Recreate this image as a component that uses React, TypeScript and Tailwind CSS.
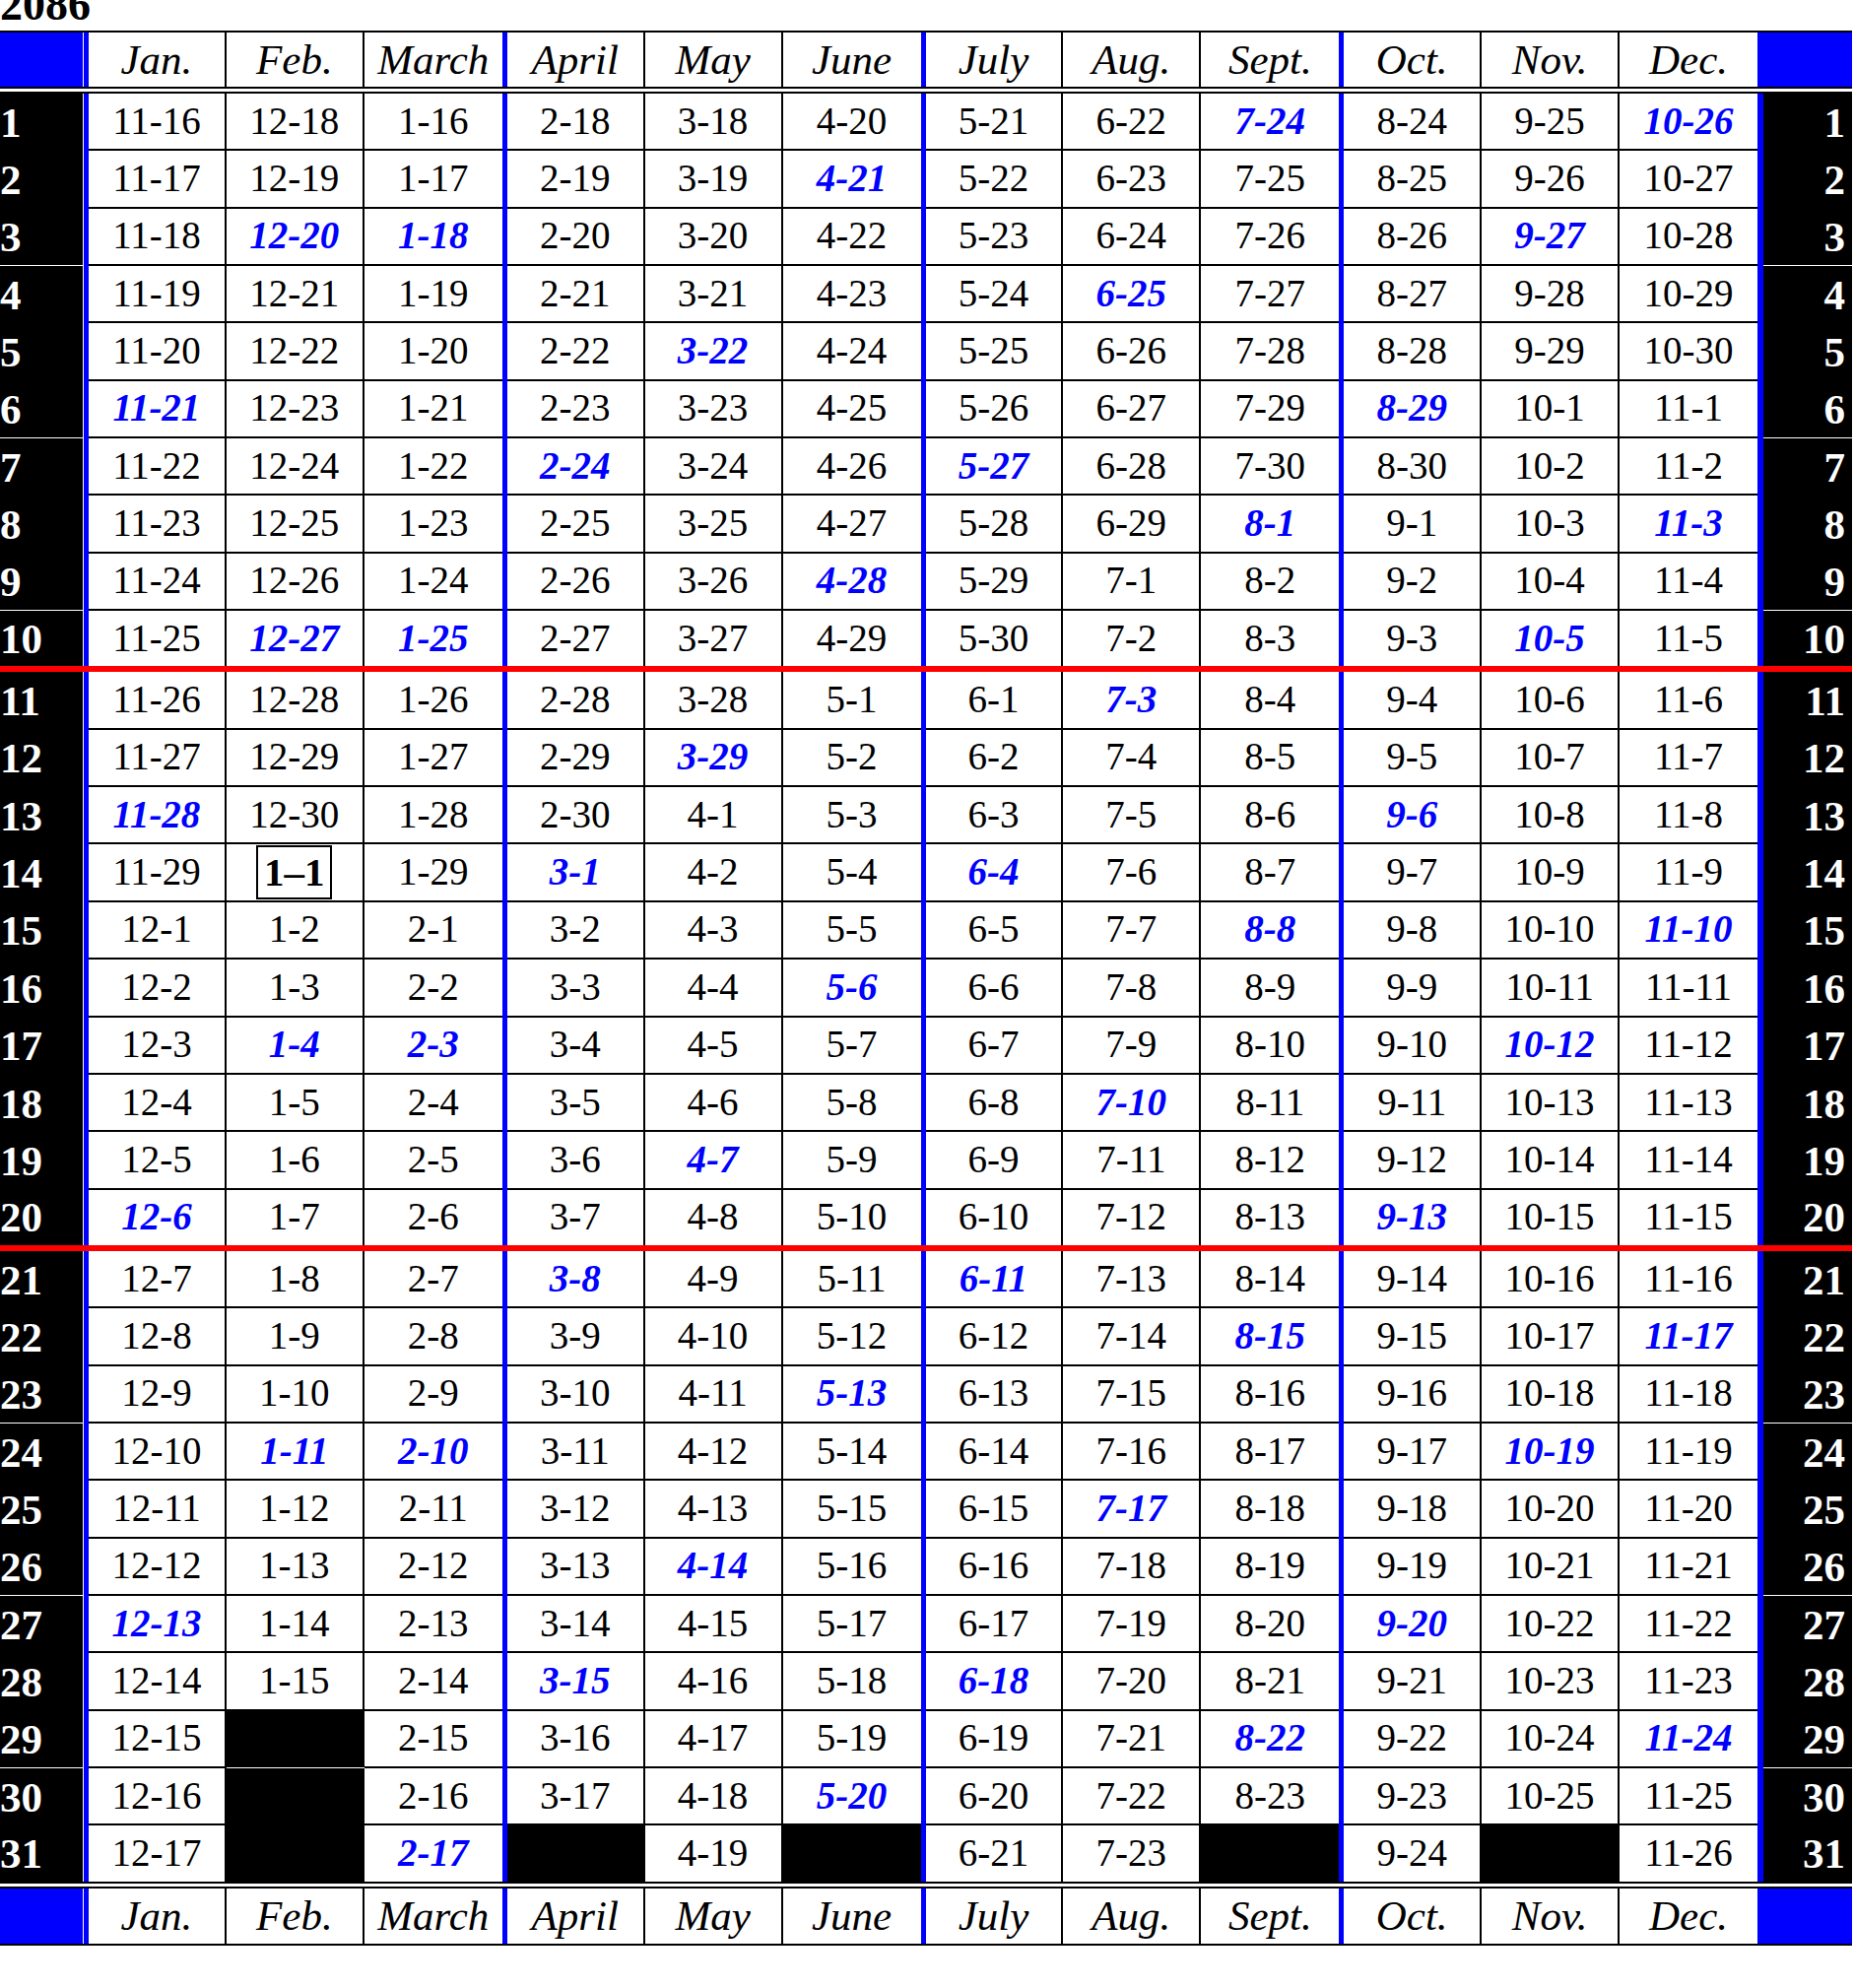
import clsx from 'clsx';

const COLS =
  'grid w-[1880px] grid-cols-[84px_6px_repeat(3,minmax(0,1fr))_5px_repeat(3,minmax(0,1fr))_5px_repeat(3,minmax(0,1fr))_5px_repeat(3,minmax(0,1fr))_6px_90px] grid-rows-[minmax(0,1fr)]';

const MONTHS = ['Jan.', 'Feb.', 'March', 'April', 'May', 'June', 'July', 'Aug.', 'Sept.', 'Oct.', 'Nov.', 'Dec.'];

// "*" = highlighted (blue bold italic), "_" = no such day, "#" = boxed new year
const DAYS: string[] = [
  '11-16 12-18 1-16 2-18 3-18 4-20 5-21 6-22 *7-24 8-24 9-25 *10-26',
  '11-17 12-19 1-17 2-19 3-19 *4-21 5-22 6-23 7-25 8-25 9-26 10-27',
  '11-18 *12-20 *1-18 2-20 3-20 4-22 5-23 6-24 7-26 8-26 *9-27 10-28',
  '11-19 12-21 1-19 2-21 3-21 4-23 5-24 *6-25 7-27 8-27 9-28 10-29',
  '11-20 12-22 1-20 2-22 *3-22 4-24 5-25 6-26 7-28 8-28 9-29 10-30',
  '*11-21 12-23 1-21 2-23 3-23 4-25 5-26 6-27 7-29 *8-29 10-1 11-1',
  '11-22 12-24 1-22 *2-24 3-24 4-26 *5-27 6-28 7-30 8-30 10-2 11-2',
  '11-23 12-25 1-23 2-25 3-25 4-27 5-28 6-29 *8-1 9-1 10-3 *11-3',
  '11-24 12-26 1-24 2-26 3-26 *4-28 5-29 7-1 8-2 9-2 10-4 11-4',
  '11-25 *12-27 *1-25 2-27 3-27 4-29 5-30 7-2 8-3 9-3 *10-5 11-5',
  '11-26 12-28 1-26 2-28 3-28 5-1 6-1 *7-3 8-4 9-4 10-6 11-6',
  '11-27 12-29 1-27 2-29 *3-29 5-2 6-2 7-4 8-5 9-5 10-7 11-7',
  '*11-28 12-30 1-28 2-30 4-1 5-3 6-3 7-5 8-6 *9-6 10-8 11-8',
  '11-29 #1–1 1-29 *3-1 4-2 5-4 *6-4 7-6 8-7 9-7 10-9 11-9',
  '12-1 1-2 2-1 3-2 4-3 5-5 6-5 7-7 *8-8 9-8 10-10 *11-10',
  '12-2 1-3 2-2 3-3 4-4 *5-6 6-6 7-8 8-9 9-9 10-11 11-11',
  '12-3 *1-4 *2-3 3-4 4-5 5-7 6-7 7-9 8-10 9-10 *10-12 11-12',
  '12-4 1-5 2-4 3-5 4-6 5-8 6-8 *7-10 8-11 9-11 10-13 11-13',
  '12-5 1-6 2-5 3-6 *4-7 5-9 6-9 7-11 8-12 9-12 10-14 11-14',
  '*12-6 1-7 2-6 3-7 4-8 5-10 6-10 7-12 8-13 *9-13 10-15 11-15',
  '12-7 1-8 2-7 *3-8 4-9 5-11 *6-11 7-13 8-14 9-14 10-16 11-16',
  '12-8 1-9 2-8 3-9 4-10 5-12 6-12 7-14 *8-15 9-15 10-17 *11-17',
  '12-9 1-10 2-9 3-10 4-11 *5-13 6-13 7-15 8-16 9-16 10-18 11-18',
  '12-10 *1-11 *2-10 3-11 4-12 5-14 6-14 7-16 8-17 9-17 *10-19 11-19',
  '12-11 1-12 2-11 3-12 4-13 5-15 6-15 *7-17 8-18 9-18 10-20 11-20',
  '12-12 1-13 2-12 3-13 *4-14 5-16 6-16 7-18 8-19 9-19 10-21 11-21',
  '*12-13 1-14 2-13 3-14 4-15 5-17 6-17 7-19 8-20 *9-20 10-22 11-22',
  '12-14 1-15 2-14 *3-15 4-16 5-18 *6-18 7-20 8-21 9-21 10-23 11-23',
  '12-15 _ 2-15 3-16 4-17 5-19 6-19 7-21 *8-22 9-22 10-24 *11-24',
  '12-16 _ 2-16 3-17 4-18 *5-20 6-20 7-22 8-23 9-23 10-25 11-25',
  '12-17 _ *2-17 _ 4-19 _ 6-21 7-23 _ 9-24 _ 11-26',
];

const WHITE_LINE_ROWS = [3, 6, 9, 23, 26, 29];
const SECTION_END = [10, 20, 31];

function Stripe({ withGap }: { withGap?: boolean }) {
  return <div className={clsx('bg-[#0000ff]', withGap && 'border-l border-white')} />;
}

function monthCells(render: (i: number) => JSX.Element) {
  const out: JSX.Element[] = [];
  for (let i = 0; i < 12; i++) {
    out.push(render(i));
    if (i === 2 || i === 5 || i === 8) out.push(<Stripe key={`s${i}`} />);
  }
  return out;
}

function MonthRow({ height }: { height: string }) {
  return (
    <div className={clsx(COLS, height)}>
      <div className="bg-[#0000ff]" />
      <Stripe withGap />
      {monthCells((i) => (
        <div
          key={i}
          className={clsx(
            'flex items-center justify-center overflow-hidden bg-white text-[43px] italic leading-none text-black',
            i % 3 !== 2 && 'border-r-2 border-black',
          )}
        >
          {MONTHS[i]}
        </div>
      ))}
      <div className="bg-[#0000ff]" />
      <div className="bg-[#0000ff]" />
    </div>
  );
}

function DayCell({ value, index, bottom, whiteLine }: { value: string; index: number; bottom: boolean; whiteLine: boolean }) {
  const edge = index % 3 === 2;
  if (value === '_') {
    return <div className={clsx('bg-black', whiteLine && 'border-b border-white')} />;
  }
  const blue = value.startsWith('*');
  const boxed = value.startsWith('#');
  const text = blue || boxed ? value.slice(1) : value;
  return (
    <div
      className={clsx(
        'flex items-center justify-center overflow-hidden bg-white leading-none',
        !edge && 'border-r-2 border-black',
        bottom && 'border-b-2 border-black',
      )}
    >
      {boxed ? (
        <div className="flex h-[55px] w-[77px] items-center justify-center border-2 border-black text-[41px] font-bold text-black">
          {text}
        </div>
      ) : blue ? (
        <span className="pb-[2px] text-[39px] font-bold italic text-[#0000ff]">{text}</span>
      ) : (
        <span className="pb-[2px] text-[39px] text-black">{text}</span>
      )}
    </div>
  );
}

function DayRow({ day, row }: { day: number; row: string }) {
  const bottom = !SECTION_END.includes(day);
  const whiteLine = WHITE_LINE_ROWS.includes(day);
  const values = row.split(' ');
  return (
    <div className={clsx(COLS, bottom ? 'h-[58.35px]' : 'h-[56.35px]')}>
      <div
        className={clsx(
          'flex items-center overflow-hidden bg-black text-[43px] font-bold leading-none text-white',
          whiteLine && 'border-b border-white',
        )}
      >
        {day}
      </div>
      <Stripe withGap />
      {monthCells((i) => (
        <DayCell key={i} value={values[i]} index={i} bottom={bottom} whiteLine={whiteLine} />
      ))}
      <Stripe />
      <div
        className={clsx(
          'flex items-center justify-end overflow-hidden bg-black pr-[7px] text-[43px] font-bold leading-none text-white',
          whiteLine && 'border-b border-white',
        )}
      >
        {day}
      </div>
    </div>
  );
}

function DoubleLine() {
  return (
    <div className="flex w-[1880px] flex-col">
      <div className="h-[2px] bg-black" />
      <div className="h-[3px] bg-white" />
      <div className="h-[2px] bg-black" />
    </div>
  );
}

export default function App() {
  return (
    <div className="h-[2018px] w-[1882px] overflow-hidden bg-white font-['Liberation_Serif',serif]">
      <div className="h-[31px] overflow-hidden">
        <div className="-mt-[18px] text-[46px] font-bold leading-[46px] text-black">2086</div>
      </div>
      <div className="h-[2px] w-[1880px] bg-black" />
      <MonthRow height="h-[55px]" />
      <DoubleLine />
      {DAYS.map((row, i) => (
        <div key={i}>
          <DayRow day={i + 1} row={row} />
          {(i + 1 === 10 || i + 1 === 20) && <div className="h-[6px] w-[1880px] bg-[#ff0000]" />}
        </div>
      ))}
      <DoubleLine />
      <MonthRow height="h-[56px]" />
      <div className="h-[2px] w-[1880px] bg-black" />
    </div>
  );
}
